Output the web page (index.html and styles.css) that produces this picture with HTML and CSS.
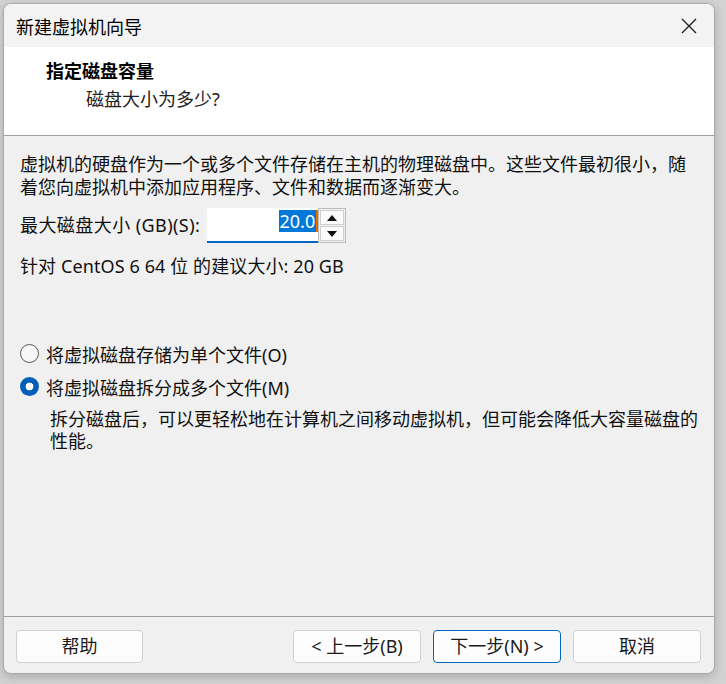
FILE: index.html
```html
<!DOCTYPE html>
<html lang="zh-CN">
<head>
<meta charset="utf-8">
<title>新建虚拟机向导</title>
<link rel="stylesheet" href="styles.css">
</head>
<body>
<div class="window">
  <div class="titlebar">
    <span class="title">新建虚拟机向导</span>
    <svg class="close" width="16" height="16" viewBox="0 0 16 16"><path d="M1 1 L15 15 M15 1 L1 15" stroke="#1a1a1a" stroke-width="1.3" fill="none"/></svg>
  </div>
  <div class="header">
    <div class="h-title">指定磁盘容量</div>
    <div class="h-sub">磁盘大小为多少?</div>
  </div>
  <div class="content">
    <p class="intro">虚拟机的硬盘作为一个或多个文件存储在主机的物理磁盘中。这些文件最初很小，随着您向虚拟机中添加应用程序、文件和数据而逐渐变大。</p>
    <div class="size-row">
      <span class="label">最大磁盘大小 (GB)(S):</span>
      <div class="field"><span class="sel">20.0</span><span class="caret"></span></div>
      <div class="spin">
        <div class="spin-btn"><svg width="10" height="6" viewBox="0 0 10 6"><path d="M5 0 L10 6 L0 6 Z" fill="#111"/></svg></div>
        <div class="spin-btn"><svg width="10" height="6" viewBox="0 0 10 6"><path d="M0 0 L10 0 L5 6 Z" fill="#111"/></svg></div>
      </div>
    </div>
    <p class="recommend">针对 CentOS 6 64 位 的建议大小: 20 GB</p>
    <div class="radios">
      <div class="radio-row"><span class="radio"></span><span>将虚拟磁盘存储为单个文件(O)</span></div>
      <div class="radio-row"><span class="radio checked"></span><span>将虚拟磁盘拆分成多个文件(M)</span></div>
      <p class="desc">拆分磁盘后，可以更轻松地在计算机之间移动虚拟机，但可能会降低大容量磁盘的性能。</p>
    </div>
  </div>
  <div class="footer">
    <button class="btn">帮助</button>
    <div class="right">
      <button class="btn">&lt; 上一步(B)</button>
      <button class="btn primary">下一步(N) &gt;</button>
      <button class="btn">取消</button>
    </div>
  </div>
</div>
</body>
</html>
```

FILE: styles.css
```css
* { box-sizing: border-box; }
html, body { margin: 0; padding: 0; }
body {
  width: 726px;
  height: 684px;
  background: #d2d2d2;
  font-family: "Noto Sans", "Noto Sans CJK SC", sans-serif;
  font-size: 18px;
  color: #111;
  overflow: hidden;
}
.window {
  margin: 3px 0 0 3px;
  width: 712px;
  height: 671px;
  border: 1px solid #a9a9a9;
  border-radius: 8px;
  overflow: hidden;
  display: flex;
  flex-direction: column;
  background: #f0f0f0;
  box-shadow: 0 3px 10px rgba(0,0,0,0.18);
}
.titlebar {
  height: 43px;
  flex: none;
  background: #f3f3f3;
  display: flex;
  align-items: center;
  justify-content: space-between;
  padding: 0 17px 0 12px;
}
.title {
  font-family: "Noto Sans CJK SC", sans-serif;
  font-size: 18px;
  line-height: 24px;
  color: #000;
}
.close { display: block; }
.header {
  flex: none;
  height: 89px;
  background: #fff;
  border-bottom: 1px solid #a0a0a0;
  padding: 11px 0 0 42px;
}
.h-title {
  font-family: "Noto Sans CJK SC", sans-serif;
  font-weight: 700;
  font-size: 18px;
  line-height: 24px;
  color: #000;
}
.h-sub {
  margin: 5px 0 0 40px;
  line-height: 24px;
  color: #222;
}
.content {
  flex: 1;
  padding: 17px 10px 0 16px;
}
.intro {
  margin: 0;
  line-height: 23px;
  width: 678px;
}
.size-row {
  margin-top: 9px;
  display: flex;
  align-items: center;
  height: 35px;
}
.label { line-height: 23px; letter-spacing: 0.43px; }
.field {
  margin-left: 7px;
  width: 111px;
  height: 35px;
  background: #fff;
  border-bottom: 2px solid #0067c0;
  display: flex;
  justify-content: flex-end;
  align-items: flex-start;
  padding-top: 2px;
}
.sel {
  background: #0078d7;
  color: #fff;
  line-height: 22px;
  height: 22px;
  padding: 0 1px 0 1px;
  font-size: 18px;
}
.caret {
  width: 2px;
  height: 22px;
  background: #e06c00;
}
.spin {
  width: 28px;
  height: 35px;
  border: 1px solid #bcbcbc;
  padding: 1px;
  display: flex;
  flex-direction: column;
  gap: 1px;
  background: #f0f0f0;
}
.spin-btn {
  flex: 1;
  border: 1px solid #cfcfcf;
  background: #fbfbfb;
  display: flex;
  align-items: center;
  justify-content: center;
}
.spin-btn svg { display: block; }
.recommend {
  margin: 12px 0 0 0;
  line-height: 23px;
  letter-spacing: 0.1px;
}
.radios { margin-top: 64px; }
.radio-row {
  display: flex;
  align-items: center;
  gap: 7px;
  height: 23px;
  margin-bottom: 10px;
  padding-left: 0;
}
.radio {
  width: 19px;
  height: 19px;
  border-radius: 50%;
  border: 1px solid #5a5a5a;
  background: #f7f7f7;
  flex: none;
}
.radio.checked {
  border: none;
  background: radial-gradient(circle, #fff 0 3.6px, #005fb8 4.2px);
}
.desc {
  margin: 0 0 0 30px;
  line-height: 22px;
}
.footer {
  flex: none;
  height: 57px;
  border-top: 1px solid #a0a0a0;
  display: flex;
  justify-content: space-between;
  padding: 13px 13px 0 12px;
}
.right { display: flex; gap: 12px; }
.btn {
  width: 128px;
  height: 33px;
  border: 1px solid #d0d0d0;
  border-radius: 4px;
  background: #fdfdfd;
  font-family: "Noto Sans", "Noto Sans CJK SC", sans-serif;
  font-size: 18px;
  color: #1a1a1a;
  padding: 0;
  line-height: 31px;
}
.footer > .btn { width: 127px; }
.btn.primary { border-color: #0067c0; }
```
